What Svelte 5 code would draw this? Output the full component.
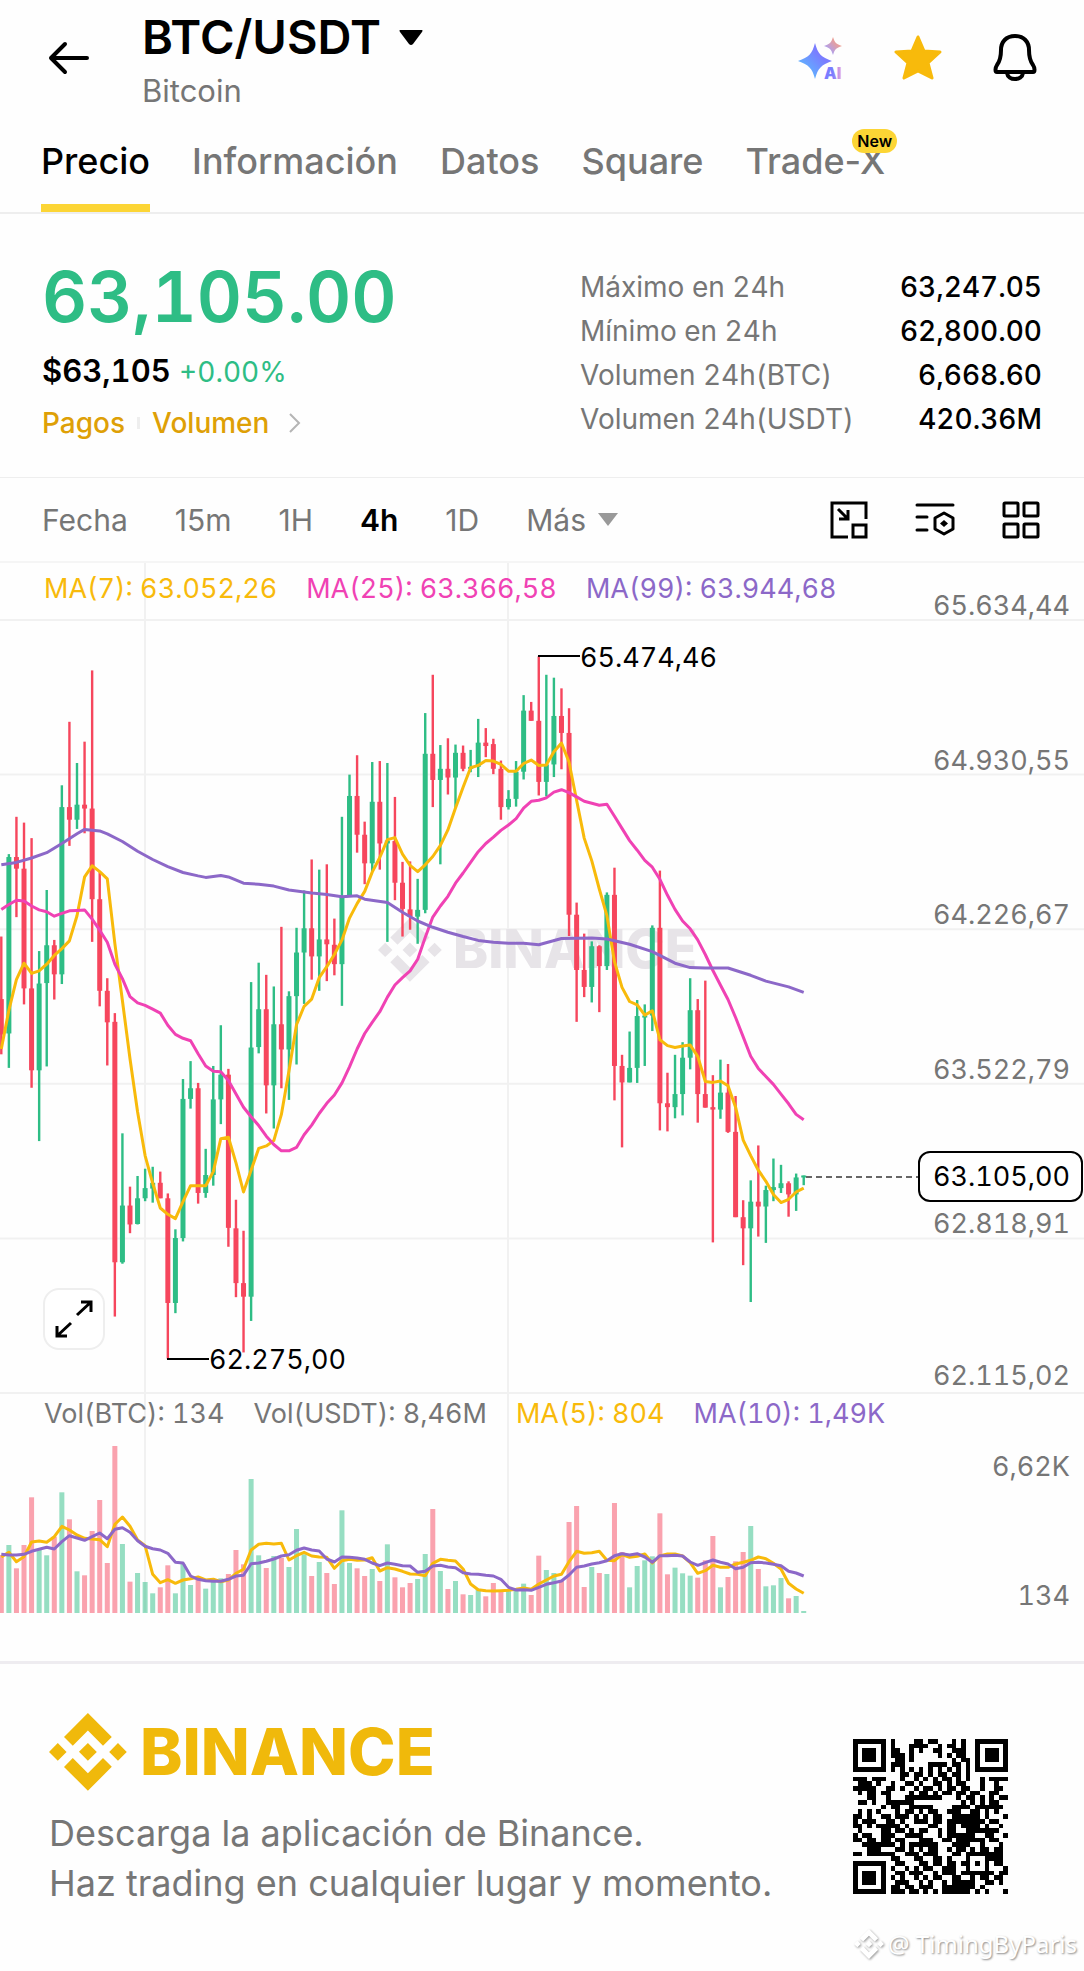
<script lang="ts">
	type Candle = [string, number, number, number, number];

	const tabs = ["Precio", "Información", "Datos", "Square", "Trade-X"];
	let activeTab = $state("Precio");

	const intervals = ["Fecha", "15m", "1H", "4h", "1D"];
	let interval = $state("4h");

	const stats = [
		{ label: "Máximo en 24h", value: "63,247.05" },
		{ label: "Mínimo en 24h", value: "62,800.00" },
		{ label: "Volumen 24h(BTC)", value: "6,668.60" },
		{ label: "Volumen 24h(USDT)", value: "420.36M" },
	];

	const axis = ["65.634,44", "64.930,55", "64.226,67", "63.522,79", "62.818,91", "62.115,02"];

	// direction, high, body top, body bottom, low (chart units, downwards)
	const candles: Candle[] = [
		["r", 653, 782, 855, 896], ["g", 483, 489, 853, 924], ["r", 406, 489, 513, 613], ["r", 418, 513, 760, 793],
		["r", 450, 760, 929, 965], ["g", 683, 750, 929, 1075], ["g", 557, 671, 749, 921], ["r", 660, 671, 731, 783],
		["g", 341, 386, 731, 751], ["r", 210, 386, 412, 466], ["g", 295, 381, 412, 431], ["r", 251, 381, 389, 440],
		["r", 104, 389, 576, 664], ["r", 520, 576, 765, 797], ["r", 739, 765, 830, 919], ["r", 811, 829, 1325, 1437],
		["g", 1059, 1208, 1325, 1328], ["r", 1169, 1208, 1247, 1265], ["g", 1147, 1193, 1246, 1247], ["g", 1132, 1172, 1193, 1199],
		["g", 1128, 1161, 1173, 1202], ["r", 1138, 1161, 1193, 1193], ["r", 1183, 1193, 1409, 1524], ["g", 1257, 1275, 1409, 1430],
		["g", 947, 988, 1275, 1282], ["g", 910, 966, 988, 1008], ["r", 955, 966, 1182, 1204], ["g", 1091, 1145, 1182, 1192],
		["g", 920, 989, 1145, 1167], ["g", 836, 938, 989, 1040], ["r", 926, 938, 1254, 1293], ["r", 1196, 1255, 1368, 1397],
		["r", 1260, 1368, 1396, 1511], ["g", 747, 882, 1396, 1446], ["g", 707, 803, 881, 894], ["r", 732, 803, 960, 1018],
		["g", 756, 834, 960, 1049], ["r", 633, 834, 886, 966], ["g", 766, 776, 886, 990], ["g", 635, 686, 776, 917],
		["g", 558, 636, 686, 792], ["r", 494, 636, 694, 742], ["g", 515, 659, 694, 765], ["r", 504, 659, 669, 745],
		["r", 616, 670, 710, 733], ["g", 406, 570, 710, 796], ["g", 319, 363, 568, 570], ["r", 279, 363, 443, 480],
		["r", 416, 443, 502, 545], ["g", 293, 375, 502, 520], ["r", 291, 375, 461, 515], ["g", 295, 455, 461, 664],
		["r", 365, 456, 542, 578], ["r", 499, 542, 596, 653], ["r", 498, 597, 612, 639], ["g", 534, 598, 612, 668],
		["g", 192, 276, 598, 605], ["r", 113, 276, 330, 386], ["g", 258, 307, 330, 504], ["r", 244, 307, 325, 360],
		["g", 257, 274, 325, 388], ["r", 259, 274, 307, 312], ["g", 268, 303, 307, 314], ["g", 204, 253, 303, 324],
		["r", 223, 253, 260, 283], ["r", 245, 256, 307, 318], ["r", 290, 307, 386, 412], ["g", 351, 369, 386, 391],
		["g", 291, 313, 369, 385], ["g", 155, 187, 313, 329], ["r", 169, 187, 208, 208], ["r", 75, 208, 334, 362],
		["g", 113, 298, 334, 364], ["g", 119, 198, 298, 324], ["r", 141, 198, 233, 308], ["r", 182, 233, 608, 652],
		["r", 583, 608, 722, 829], ["r", 647, 722, 757, 778], ["g", 663, 673, 757, 789], ["r", 671, 673, 714, 809],
		["g", 562, 567, 714, 722], ["r", 511, 567, 920, 991], ["r", 897, 920, 954, 1088], ["g", 849, 924, 954, 954],
		["g", 784, 817, 924, 955], ["g", 793, 816, 818, 920], ["g", 630, 635, 816, 848], ["r", 517, 635, 997, 1053],
		["r", 934, 997, 1005, 1055], ["g", 897, 978, 1005, 1028], ["g", 871, 903, 978, 1022], ["g", 739, 805, 903, 927],
		["r", 782, 805, 978, 1037], ["r", 744, 978, 1006, 1006], ["r", 939, 1005, 1010, 1284], ["g", 907, 975, 1010, 1029],
		["r", 916, 975, 1056, 1058], ["r", 982, 1056, 1232, 1232], ["r", 1197, 1232, 1255, 1331], ["g", 1156, 1200, 1255, 1407],
		["r", 1084, 1200, 1210, 1272], ["g", 1167, 1176, 1210, 1285], ["g", 1111, 1170, 1176, 1199], ["g", 1124, 1162, 1172, 1182],
		["r", 1158, 1162, 1185, 1231], ["g", 1142, 1150, 1185, 1219], ["g", 1146, 1146, 1150, 1166],
	];

	const ma7 = [
		885, 805, 742, 708, 729, 724, 710, 692, 678, 662, 610, 530, 507, 519, 534, 668, 785, 905, 1015, 1105, 1162, 1213,
		1226, 1235, 1200, 1167, 1167, 1167, 1138, 1070, 1067, 1120, 1180, 1135, 1090, 1085, 1074, 1020, 930, 835, 797, 782,
		738, 715, 690, 660, 615, 585, 560, 520, 490, 453, 449, 483, 506, 519, 505, 488, 465, 433, 388, 345, 305, 300, 290,
		291, 298, 312, 312, 296, 289, 300, 299, 272, 254, 293, 372, 450, 497, 555, 610, 705, 758, 787, 794, 815, 806, 866,
		878, 882, 879, 877, 900, 952, 954, 951, 961, 1005, 1073, 1105, 1135, 1158, 1185, 1202, 1195, 1180, 1172,
	];
	const ma25 = [
		597, 587, 578, 580, 590, 598, 602, 611, 605, 600, 599, 598, 617, 640, 665, 710, 740, 777, 790, 795, 803, 811, 836,
		855, 863, 868, 895, 920, 931, 932, 950, 978, 1005, 1025, 1043, 1065, 1082, 1095, 1095, 1088, 1062, 1042, 1018, 997,
		980, 955, 922, 885, 853, 830, 808, 778, 753, 738, 724, 700, 655, 613, 590, 570, 543, 522, 500, 478, 461, 448, 434,
		423, 410, 388, 374, 372, 367, 355, 350, 356, 365, 374, 378, 382, 380, 405, 430, 455, 475, 496, 510, 535, 568, 597,
		621, 637, 660, 690, 723, 753, 783, 820, 860, 900, 925, 942, 958, 978, 998, 1020, 1031,
	];
	// the slow average is kept as [index, value] pairs
	const ma99 = [
		[0, 505], [2, 500], [4, 491], [6, 480], [8, 461], [10, 441], [11, 432], [13, 435], [14, 441], [16, 457], [18, 477],
		[20, 494], [22, 509], [24, 521], [26, 528], [27, 531], [29, 527], [30, 530], [32, 543], [34, 545], [36, 549],
		[38, 557], [41, 563], [43, 566], [45, 571], [47, 569], [48, 576], [51, 583], [53, 603], [55, 621], [57, 634],
		[59, 644], [61, 653], [63, 661], [65, 665], [67, 667], [69, 667], [71, 670], [74, 657], [78, 656], [80, 658],
		[83, 669], [86, 684], [89, 708], [91, 717], [93, 718], [96, 718], [99, 733], [101, 745], [104, 757], [106, 768],
	];

	const volumes = [
		525, 495, 565, 495, 352, 507, 526, 470, 337, 418, 574, 586, 453, 360, 549, 198, 492, 605, 579, 606, 640, 622, 556,
		640, 552, 615, 598, 626, 602, 595, 582, 510, 553, 297, 526, 564, 528, 534, 561, 447, 523, 588, 546, 579, 612, 391,
		549, 565, 588, 567, 603, 493, 592, 622, 609, 597, 522, 387, 573, 627, 603, 643, 645, 628, 649, 609, 632, 632, 633,
		611, 645, 527, 570, 579, 601, 426, 378, 621, 561, 579, 582, 369, 516, 622, 558, 541, 529, 400, 583, 563, 580, 587,
		593, 541, 468, 622, 591, 544, 516, 438, 567, 619, 616, 594, 655, 648, 693,
	];
	const volMa5 = [
		531, 517, 545, 530, 486, 483, 487, 470, 439, 450, 465, 475, 477, 479, 500, 433, 411, 439, 480, 497, 583, 608, 599,
		610, 600, 596, 591, 600, 598, 605, 600, 580, 568, 510, 493, 490, 492, 490, 540, 527, 517, 528, 531, 532, 565, 542,
		538, 541, 540, 533, 573, 563, 567, 574, 582, 583, 587, 550, 538, 541, 543, 567, 612, 629, 632, 633, 632, 631, 628,
		624, 628, 612, 600, 588, 583, 545, 514, 520, 518, 514, 541, 542, 524, 532, 529, 522, 549, 528, 522, 522, 528, 548,
		580, 572, 556, 562, 562, 552, 547, 541, 531, 536, 550, 567, 610, 627, 640,
	];
	const volMa10 = [
		523, 525, 525, 523, 514, 508, 502, 507, 485, 467, 474, 481, 470, 459, 476, 448, 443, 457, 482, 499, 506, 510, 520,
		547, 549, 588, 598, 602, 604, 604, 598, 588, 586, 551, 549, 544, 537, 528, 524, 511, 504, 510, 513, 537, 546, 531,
		532, 534, 538, 549, 557, 549, 553, 557, 558, 577, 574, 558, 556, 561, 563, 578, 582, 583, 586, 588, 598, 622, 630,
		629, 631, 622, 613, 608, 603, 585, 562, 558, 552, 548, 542, 527, 521, 525, 521, 531, 547, 527, 527, 526, 528, 546,
		556, 548, 540, 547, 552, 566, 562, 548, 547, 549, 553, 557, 574, 579, 588,
	];

	const x = (i: number) => 1.3 + i * 7.57;
	const y = (v: number) => 57 + v / 2.063;
	const vy = (v: number) => 817 + v / 3;
	const line = (values: number[], scale: (v: number) => number) =>
		values.map((v, i) => `${x(i).toFixed(1)},${scale(v).toFixed(1)}`).join(" ");
	const ma99Points = ma99.map(([i, v]) => `${x(i).toFixed(1)},${y(v).toFixed(1)}`).join(" ");

	const qr = [
		"111111101000011011000101001111111",
		"100000101000111100101101001000001",
		"101110101100101001100111001011101",
		"101110101110100000101011001011101",
		"101110100110100000000101101011101",
		"100000101110000011110110101000001",
		"111111101010101010101010101111111",
		"000000000011011010110110100000000",
		"111011100010010101011010100101111",
		"011101001001101001101011000100100",
		"111110011010010110101101100100110",
		"010110110000101101011011011001100",
		"000110010001111111100010110101011",
		"011010011111100000000001010101100",
		"000000101100111110000111101111110",
		"010101000101101011001110011010100",
		"110100110111010101100111111010001",
		"101110011010011101101111111101100",
		"110101111101000011001101111010010",
		"010000110110101100101100111111100",
		"101100111001111000101111110011001",
		"110110110110001110011011111101100",
		"001111111010111111000111100100010",
		"000111000110101011001011010110110",
		"110111111001110111000110111111110",
		"000000001100011001101000100011110",
		"111111100110001101101101101010110",
		"100000101001010110011100100010001",
		"101110100110111001011101111111011",
		"101110101010010101100110010110110",
		"101110100111001010010111110011010",
		"100000101101101110011111110100000",
		"111111101110110101011111101010001",
	];
	const qrPath = qr
		.map((row, r) => [...row].map((cell, c) => (cell === "1" ? `M${c} ${r}h1v1h-1z` : "")).join(""))
		.join("");

	const logo =
		"M38.73 53.2l24.59-24.58 24.6 24.6 14.3-14.31L63.32 0 24.43 38.89zM0 63.31l14.3-14.31 14.31 14.31-14.31 14.3zM38.73 73.41l24.59 24.59 24.6-24.6 14.31 14.29-38.9 38.91-38.91-38.88zM98 63.31l14.3-14.31 14.31 14.3-14.31 14.32zM77.83 63.3L63.32 48.78 48.81 63.28l14.51 14.5z";
</script>

<div class="page">
	<header>
		<button class="icon" aria-label="Volver">
			<svg width="42" height="34" viewBox="0 0 42 34" fill="none" stroke="#000" stroke-width="4" stroke-linecap="round" stroke-linejoin="round">
				<path d="M39 17H3M17 3L3 17l14 14" />
			</svg>
		</button>
		<div class="pair">
			<button class="symbol">
				BTC/USDT
				<svg width="24" height="15" viewBox="0 0 24 15"><path d="M1 0h22q1 0 0 2L14 14q-2 2-4 0L1 2Q0 0 1 0z" /></svg>
			</button>
			<p>Bitcoin</p>
		</div>
		<div class="actions">
			<button class="icon" aria-label="Asistente">
				<svg width="48" height="48" viewBox="0 0 48 48">
					<defs>
						<linearGradient id="spark" x1="0" y1="1" x2="1" y2="0">
							<stop offset="0.2" stop-color="#5fb4ff" />
							<stop offset="0.65" stop-color="#7a7dff" />
						</linearGradient>
						<linearGradient id="spark-small" x1="0" y1="1" x2="1" y2="0">
							<stop offset="0.2" stop-color="#a8a0f8" />
							<stop offset="0.85" stop-color="#ff9f7a" />
						</linearGradient>
						<linearGradient id="spark-text" x1="0" y1="0" x2="1" y2="0">
							<stop offset="0.5" stop-color="#7a7dff" />
							<stop offset="1" stop-color="#e9a3d8" />
						</linearGradient>
					</defs>
					<path d="M18 9c3 11 6 14 17 18-11 4-14 7-17 18C15 34 12 31 1 27c11-4 14-7 17-18z" fill="url(#spark)" />
					<path d="M36 3c2 6 3 7 9 9-6 2-7 3-9 9-2-6-3-7-9-9 6-2 7-3 9-9z" fill="url(#spark-small)" />
					<text x="27" y="45" class="ai" fill="url(#spark-text)">AI</text>
				</svg>
			</button>
			<button class="icon" aria-label="Favorito">
				<svg width="48" height="48" viewBox="0 0 48 48" fill="#f8ba0b" stroke="#f8ba0b" stroke-width="3" stroke-linejoin="round">
					<path d="M24 3l6 14 16 1-12 11 4 15-14-7-14 7 4-15L2 18l16-1z" />
				</svg>
			</button>
			<button class="icon" aria-label="Alertas">
				<svg width="48" height="48" viewBox="0 0 48 48" fill="none" stroke="#000" stroke-width="4" stroke-linejoin="round">
					<path d="M24 2c-9 0-14 6-14 14 0 8-1 11-4 15-2 3-2 7 0 7h36c2 0 2-4 0-7-3-4-4-7-4-15 0-8-5-14-14-14z" />
					<path d="M16 39c1 8 15 8 16 0" />
				</svg>
			</button>
		</div>
	</header>

	<nav>
		{#each tabs as tab}
			<a href="#{tab}" class:active={activeTab === tab} onclick={() => (activeTab = tab)}>
				{tab}
				{#if tab === "Trade-X"}<span class="badge">New</span>{/if}
			</a>
		{/each}
	</nav>

	<section class="summary">
		<div>
			<p class="price">63,105.00</p>
			<p class="change"><b>$63,105</b> <span>+0.00%</span></p>
			<div class="tags">
				<a href="#pagos">Pagos</a>
				<i></i>
				<a href="#volumen">Volumen</a>
				<svg width="12" height="20" viewBox="0 0 12 20" fill="none" stroke="#b5b5b5" stroke-width="2"><path d="M1 1l9 9-9 9" /></svg>
			</div>
		</div>
		<dl>
			{#each stats as stat}
				<div>
					<dt>{stat.label}</dt>
					<dd>{stat.value}</dd>
				</div>
			{/each}
		</dl>
	</section>

	<div class="toolbar">
		{#each intervals as item}
			<button class:active={interval === item} onclick={() => (interval = item)}>{item}</button>
		{/each}
		<button class="more">
			Más
			<svg width="20" height="13" viewBox="0 0 20 13"><path d="M0 0h20L10 13z" fill="#999" /></svg>
		</button>
		<div class="tools">
			<button class="icon" aria-label="Minimizar gráfico">
				<svg width="38" height="38" viewBox="0 0 38 38" fill="none" stroke="#000" stroke-width="3">
					<path d="M36 18V2H2v34h16" />
					<rect x="23" y="24" width="13" height="12" />
					<path d="M8 8l9 9M18 9v9H9" />
				</svg>
			</button>
			<button class="icon" aria-label="Indicadores">
				<svg width="40" height="38" viewBox="0 0 40 38" fill="none" stroke="#000" stroke-width="3" stroke-linecap="round">
					<path d="M2 4h36M2 16h10M2 29h10" />
					<path d="M29 12l9 5v11l-9 5-9-5V17z" stroke-linejoin="round" />
					<path d="M29 19l4 3.500-4 3.500-4-3.500z" fill="#000" stroke="none" />
				</svg>
			</button>
			<button class="icon" aria-label="Diseño">
				<svg width="38" height="38" viewBox="0 0 38 38" fill="none" stroke="#000" stroke-width="3">
					<rect x="2" y="2" width="14" height="13" rx="1" />
					<rect x="22" y="2" width="14" height="13" rx="1" />
					<rect x="2" y="23" width="14" height="13" rx="1" />
					<rect x="22" y="23" width="14" height="13" rx="1" />
				</svg>
			</button>
		</div>
	</div>

	<section class="chart">
		<svg viewBox="0 0 1084 1098" role="img" aria-label="Gráfico BTC/USDT">
			<g class="grid">
				{#each axis as _, i}
					<path d="M0 {57 + i * 154.6}H1084" />
				{/each}
				<path d="M145 0V1049M508 0V1049" />
			</g>

			<g class="watermark">
				<svg x="378" y="355" width="64" height="64" viewBox="0 0 127 127"><path d={logo} /></svg>
				<text x="453" y="405">BINANCE</text>
			</g>

			{#each candles as [dir, high, top, bottom, low], i}
				<g class={dir}>
					<rect x={x(i) - 1.2} y={y(high)} width="2.400" height={y(low) - y(high)} />
					<rect x={x(i) - 2.5} y={y(top)} width="5" height={Math.max(2, y(bottom) - y(top))} />
					<rect class="vol" x={x(i) - 2.5} y={vy(volumes[i])} width="5" height={1050 - vy(volumes[i])} />
				</g>
			{/each}

			<polyline class="yellow" points={line(ma7, y)} />
			<polyline class="pink" points={line(ma25, y)} />
			<polyline class="purple" points={ma99Points} />
			<polyline class="yellow" points={line(volMa5, vy)} />
			<polyline class="purple" points={line(volMa10, vy)} />

			<g class="callout">
				<path d="M538 93H580M167 796H209" />
				<text x="580" y="104">65.474,46</text>
				<text x="209" y="806">62.275,00</text>
			</g>

			<g class="axis">
				{#each axis as label, i}
					<text x="1070" y={Math.min(52 + i * 154.6, 822)}>{label}</text>
				{/each}
				<text x="1070" y="913">6,62K</text>
				<text x="1070" y="1042">134</text>
			</g>

			<path d="M806 614H919" class="dash" />
			<rect x="919" y="589" width="163" height="49" rx="11" class="tag" />
			<text x="1070" y="623" class="last">63.105,00</text>
		</svg>

		<div class="legend">
			<span class="yellow">MA(7): 63.052,26</span>
			<span class="pink">MA(25): 63.366,58</span>
			<span class="purple">MA(99): 63.944,68</span>
		</div>
		<div class="legend volume">
			<span>Vol(BTC): 134</span>
			<span>Vol(USDT): 8,46M</span>
			<span class="yellow">MA(5): 804</span>
			<span class="purple">MA(10): 1,49K</span>
		</div>
		<button class="expand" aria-label="Pantalla completa">
			<svg width="40" height="40" viewBox="0 0 40 40" fill="none" stroke="#000" stroke-width="3">
				<path d="M23 16L37 3M27 3h10v10M17 24L3 37M3 27v10h10" />
			</svg>
		</button>
	</section>

	<footer>
		<div>
			<div class="brand">
				<svg width="78" height="78" viewBox="0 0 127 127" fill="#f0b90b"><path d={logo} /></svg>
				<strong>BINANCE</strong>
			</div>
			<p>Descarga la aplicación de Binance.<br />Haz trading en cualquier lugar y momento.</p>
		</div>
		<svg class="qr" viewBox="0 0 33 33" role="img" aria-label="Código QR"><path d={qrPath} /></svg>
		<div class="author">
			<svg width="30" height="30" viewBox="0 0 127 127"><path d={logo} /></svg>
			@ TimingByParis
		</div>
	</footer>
</div>

<style>
	:global(body) {
		background: #fefefe;
	}

	.page {
		font-family: Inter, "Liberation Sans", sans-serif;
		font-size: 28px;
		color: #000;
		overflow: hidden;
	}

	p,
	dl,
	dd {
		margin: 0;
	}

	a {
		color: inherit;
		text-decoration: none;
	}

	button {
		padding: 0;
		border: 0;
		background: none;
		font: inherit;
		color: inherit;
		cursor: pointer;
	}

	svg {
		display: block;
	}

	header {
		display: flex;
		align-items: center;
		height: 116px;
		padding: 0 45px 0 48px;
	}

	.pair {
		margin-left: 52px;
		padding-top: 10px;
	}

	.symbol {
		display: flex;
		align-items: center;
		gap: 18px;
		font-size: 47px;
		font-weight: 600;
		line-height: 56px;
	}

	.pair p {
		font-size: 31px;
		line-height: 52px;
		color: #767676;
	}

	.actions {
		display: flex;
		gap: 49px;
		margin-left: auto;
	}

	.ai {
		font-size: 16px;
		font-weight: 900;
	}

	nav {
		display: flex;
		gap: 42px;
		padding: 0 41px;
		border-bottom: 2px solid #eee;
		font-size: 36px;
		font-weight: 500;
		color: #767676;
	}

	nav a {
		position: relative;
		padding-top: 2px;
		line-height: 86px;
		border-bottom: 8px solid transparent;
	}

	nav a.active {
		color: #000;
		border-color: #fcd535;
	}

	.badge {
		position: absolute;
		top: 13px;
		right: -12px;
		padding: 0 5px;
		border-radius: 12px;
		background: #fcd535;
		color: #000;
		font-size: 16px;
		font-weight: 600;
		line-height: 24px;
	}

	.summary {
		display: grid;
		grid-template-columns: 1fr 462px;
		padding: 43px 42px 32px;
		border-bottom: 1px solid #eee;
		font-variant-numeric: tabular-nums;
	}

	.price {
		font-size: 70px;
		font-weight: 600;
		line-height: 80px;
		color: #2ebd85;
	}

	.change {
		margin-top: 10px;
		font-size: 31px;
		line-height: 48px;
	}

	.change b {
		font-weight: 600;
	}

	.change span {
		font-size: 28px;
		color: #2ebd85;
	}

	.tags {
		display: flex;
		align-items: center;
		gap: 12px;
		margin-top: 5px;
		line-height: 44px;
		font-weight: 500;
		color: #dea006;
	}

	.tags i {
		width: 3px;
		height: 12px;
		background: #eee;
	}

	.tags svg {
		margin-left: 8px;
	}

	dl {
		padding-top: 8px;
		line-height: 44px;
	}

	dl div {
		display: flex;
		justify-content: space-between;
	}

	dt {
		color: #767676;
	}

	dd {
		font-weight: 500;
	}

	.toolbar {
		display: flex;
		align-items: center;
		gap: 47px;
		height: 83px;
		padding: 0 44px 0 42px;
		border-bottom: 2px solid #f5f5f5;
		font-size: 30px;
		color: #767676;
	}

	.toolbar .active {
		color: #000;
		font-weight: 600;
	}

	.more {
		display: flex;
		align-items: center;
		gap: 12px;
	}

	.tools {
		display: flex;
		gap: 47px;
		margin-left: auto;
	}

	.chart {
		position: relative;
		border-bottom: 3px solid #eeecf0;
		font-size: 27px;
		font-variant-numeric: tabular-nums;
	}

	.chart > svg {
		width: 100%;
	}

	.grid path {
		stroke: #f1f1f1;
		stroke-width: 2;
	}

	.watermark {
		fill: #e7e4e8;
		font-size: 53px;
		font-weight: 800;
	}

	.r {
		fill: #f6465d;
	}

	.g {
		fill: #2ebd85;
	}

	.vol {
		opacity: 0.5;
	}

	polyline {
		fill: none;
		stroke-width: 3;
		stroke-linejoin: round;
	}

	polyline.yellow {
		stroke: #f8ba0b;
	}

	polyline.pink {
		stroke: #f042b4;
	}

	polyline.purple {
		stroke: #8c68c8;
	}

	.callout path {
		stroke: #000;
		stroke-width: 2;
	}

	.axis,
	.last {
		text-anchor: end;
	}

	.axis {
		fill: #767676;
	}

	.dash {
		stroke: #666;
		stroke-width: 2;
		stroke-dasharray: 6 4;
	}

	.tag {
		fill: #fff;
		stroke: #000;
		stroke-width: 2;
	}

	.legend {
		position: absolute;
		top: 4px;
		left: 44px;
		display: flex;
		gap: 29px;
		line-height: 44px;
		white-space: nowrap;
		color: #767676;
	}

	.legend.volume {
		top: 829px;
	}

	.legend .yellow {
		color: #f8ba0b;
	}

	.legend .pink {
		color: #f042b4;
	}

	.legend .purple {
		color: #8c68c8;
	}

	.expand {
		position: absolute;
		left: 43px;
		top: 725px;
		display: grid;
		place-items: center;
		width: 62px;
		height: 62px;
		border: 2px solid #eee;
		border-radius: 16px;
		background: #fff;
	}

	footer {
		position: relative;
		display: flex;
		justify-content: space-between;
		padding: 49px 76px 62px 49px;
	}

	.brand {
		display: flex;
		align-items: center;
		gap: 13px;
	}

	.brand strong {
		font-size: 64px;
		font-weight: 800;
		line-height: 78px;
		color: #f0b90b;
	}

	footer p {
		margin-top: 17px;
		font-size: 36px;
		line-height: 50px;
		color: #767676;
	}

	.qr {
		width: 155px;
		height: 155px;
		margin-top: 26px;
		shape-rendering: crispEdges;
	}

	.author {
		position: absolute;
		right: 7px;
		bottom: 8px;
		display: flex;
		align-items: center;
		gap: 4px;
		font-family: "Noto Sans", "Open Sans", sans-serif;
		font-size: 24px;
		line-height: 36px;
		color: #fff;
		fill: #fff;
		text-shadow: 1px 1px 2px #888;
	}

	.author svg {
		filter: drop-shadow(1px 1px 1px #999);
	}
</style>
